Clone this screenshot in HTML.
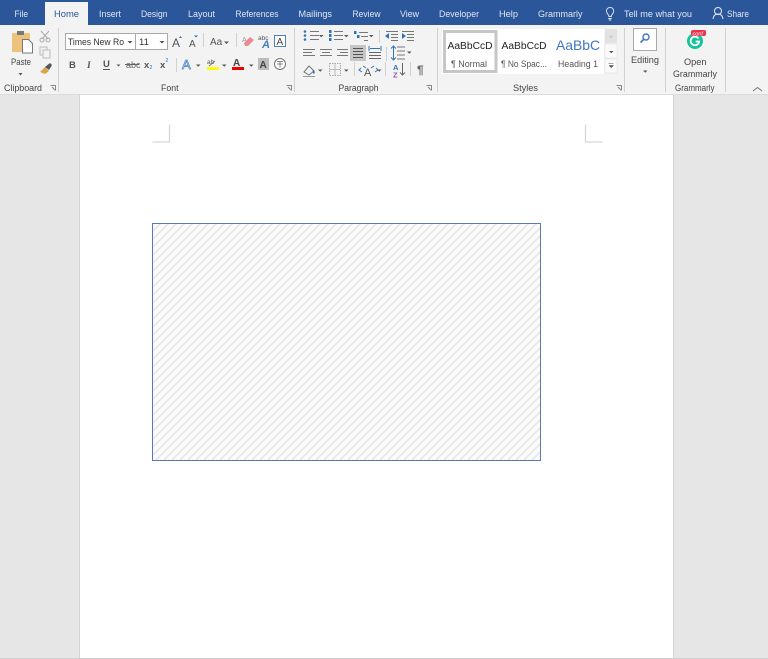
<!DOCTYPE html>
<html><head><meta charset="utf-8"><style>
html,body{margin:0;padding:0;background:#e6e6e6;width:768px;height:659px;overflow:hidden}
svg{display:block}
text{font-family:"Liberation Sans",sans-serif}
.t{font-size:9.5px;fill:#dfe7f3}
.r{font-size:9px;fill:#444}
.s{stroke:#d0d0d0;stroke-width:1}
.l{stroke:#888;stroke-width:1;fill:none}
.d{fill:#555}
</style></head><body>
<svg width="768" height="659" viewBox="0 0 768 659" xmlns="http://www.w3.org/2000/svg">
<defs>
<pattern id="h" width="8" height="8" patternUnits="userSpaceOnUse">
<rect width="8" height="8" fill="#fbfbfb"/>
<path d="M-2 2L2 -2M-2 10L10 -2M6 10L10 6" stroke="#e9e9e9" stroke-width="2"/>
</pattern>
</defs>
<rect width="768" height="659" fill="#e6e6e6"/>
<rect x="0" y="658" width="768" height="1" fill="#cfcfcf"/>
<rect x="80" y="95" width="593" height="563" fill="#fff"/>
<rect x="79" y="95" width="1" height="563" fill="#d4d4d4"/>
<rect x="673" y="95" width="1" height="563" fill="#d4d4d4"/>
<rect y="0" width="768" height="25" fill="#2b579a"/>
<rect y="25" width="768" height="69" fill="#f3f3f3"/>
<rect y="94" width="768" height="1" fill="#dcdcdc"/>
<rect x="45" y="2" width="43" height="23" fill="#f3f3f3"/>
<text class="t" x="14.500" y="17" textLength="13.500" lengthAdjust="spacingAndGlyphs">File</text>
<text class="t" x="54" y="17" style="fill:#2b579a" textLength="25" lengthAdjust="spacingAndGlyphs">Home</text>
<text class="t" x="99" y="17" textLength="22" lengthAdjust="spacingAndGlyphs">Insert</text>
<text class="t" x="141" y="17" textLength="26.500" lengthAdjust="spacingAndGlyphs">Design</text>
<text class="t" x="188" y="17" textLength="27" lengthAdjust="spacingAndGlyphs">Layout</text>
<text class="t" x="235.500" y="17" textLength="43" lengthAdjust="spacingAndGlyphs">References</text>
<text class="t" x="298.500" y="17" textLength="33.500" lengthAdjust="spacingAndGlyphs">Mailings</text>
<text class="t" x="352.500" y="17" textLength="28" lengthAdjust="spacingAndGlyphs">Review</text>
<text class="t" x="400" y="17" textLength="19" lengthAdjust="spacingAndGlyphs">View</text>
<text class="t" x="439" y="17" textLength="40" lengthAdjust="spacingAndGlyphs">Developer</text>
<text class="t" x="499" y="17" textLength="19" lengthAdjust="spacingAndGlyphs">Help</text>
<text class="t" x="538" y="17" textLength="44.500" lengthAdjust="spacingAndGlyphs">Grammarly</text>
<text class="t" x="624" y="17" textLength="68" lengthAdjust="spacingAndGlyphs">Tell me what you</text>
<text class="t" x="727" y="17" textLength="22" lengthAdjust="spacingAndGlyphs">Share</text>
<path d="M609 16.500c0-2-2.500-2.500-2.500-5.500a3.600 3.600 0 0 1 7.200 0c0 3-2.500 3.500-2.500 5.500zM608.300 18.500h3.400M608.800 20h2.400" fill="none" stroke="#e6ecf5" stroke-width=".9"/>
<circle cx="718" cy="11" r="3.500" fill="none" stroke="#e6ecf5" stroke-width="1"/>
<path d="M713 19c.5-3.500 2.500-5 5-5s4.500 1.500 5 5" fill="none" stroke="#e6ecf5" stroke-width="1"/>
<g class="s"><path d="M58.500 28v64M294.500 28v64M437.500 28v64M624.500 28v64M665.500 28v64M725.500 28v64"/></g>
<text class="r" x="4" y="91" textLength="38" lengthAdjust="spacingAndGlyphs">Clipboard</text>
<text class="r" x="161" y="91" textLength="17.500" lengthAdjust="spacingAndGlyphs">Font</text>
<text class="r" x="338.500" y="91" textLength="40" lengthAdjust="spacingAndGlyphs">Paragraph</text>
<text class="r" x="513" y="91" textLength="25" lengthAdjust="spacingAndGlyphs">Styles</text>
<text class="r" x="675" y="91" textLength="39.500" lengthAdjust="spacingAndGlyphs">Grammarly</text>
<g class="l"><path d="M50.500 85.500h5v5M52 87l3 3M286.500 85.500h5v5M288 87l3 3M426.500 85.500h5v5M428 87l3 3M616.500 85.500h5v5M618 87l3 3"/></g>
<path d="M753 91l4.500-3.500 4.500 3.500" fill="none" stroke="#777"/>
<!-- clipboard -->
<rect x="12" y="33" width="18" height="19" fill="#ecc27c"/>
<rect x="17" y="31" width="7" height="4" fill="#777"/>
<path d="M22.500 39.500h6l4 4v9.500h-10z" fill="#fff" stroke="#777"/>
<text class="r" x="11" y="65" style="font-size:9.500px" textLength="20" lengthAdjust="spacingAndGlyphs">Paste</text>
<path d="M18.500 73h4l-2 2.500z" class="d"/>
<path d="M41 31l7 8M49 31l-7 8" stroke="#aaa" fill="none"/><circle cx="42" cy="40" r="2" fill="none" stroke="#aaa"/><circle cx="48" cy="40" r="2" fill="none" stroke="#aaa"/>
<rect x="40" y="47" width="7" height="8" fill="#f3f3f3" stroke="#bbb"/><rect x="43" y="50" width="7" height="8" fill="#f3f3f3" stroke="#bbb"/>
<path d="M40 72l5-5 4 4-4 3z" fill="#d9a441"/><path d="M45 67l5-4 2 2-3 5z" fill="#555"/>
<!-- font -->
<rect x="65.500" y="33.500" width="70" height="16" fill="#fff" stroke="#a9a9a9"/>
<rect x="135.500" y="33.500" width="32" height="16" fill="#fff" stroke="#a9a9a9"/>
<text x="68" y="45" style="font-size:9.500px;fill:#333" textLength="56" lengthAdjust="spacingAndGlyphs">Times New Ro</text>
<text x="139" y="45" style="font-size:9.500px;fill:#333">11</text>
<path d="M127.500 41h5l-2.500 2.500zM159.500 41h5l-2.500 2.500z" class="d"/>
<text x="172" y="47" style="font-size:12px;fill:#555">A</text><path d="M179 38l1.500-2 1.500 2z" fill="#2b6cb0"/>
<text x="189" y="47" style="font-size:10px;fill:#555">A</text><path d="M194 35.500h4l-2 2z" fill="#2b6cb0"/>
<path d="M203.500 33v14" class="s"/>
<text x="210" y="45" style="font-size:10px;fill:#555">Aa</text><path d="M224 41.500h5l-2.500 2.500z" class="d"/>
<path d="M236.500 33v14" class="s"/>
<text x="242" y="42" style="font-size:7px;fill:#999">A</text><path d="M244 43l6-6 4 3-6 6h-3z" fill="#ea8a94"/>
<text x="258" y="40" style="font-size:6.500px;fill:#555">abc</text><text x="262" y="48" style="font-size:11px;font-weight:bold;font-style:italic;fill:#3f7fc0">A</text>
<rect x="274.500" y="35.500" width="11" height="11" fill="#fff" stroke="#4f7fb5"/><text x="276.500" y="45" style="font-size:10px;fill:#444">A</text>
<g style="font-size:9.500px;fill:#555"><text x="69" y="68" font-weight="bold">B</text><text x="87" y="68" font-style="italic" style="font-family:'Liberation Serif',serif;font-weight:bold">I</text><text x="103" y="67" font-weight="bold">U</text></g>
<path d="M103 69.500h7" stroke="#555"/><path d="M116.500 64.500h4l-2 2z" class="d"/>
<text x="126" y="68" style="font-size:9px;fill:#666">abc</text><path d="M125 64.500h14" stroke="#666"/>
<text x="144" y="68" style="font-size:9.500px;font-weight:bold;fill:#555">x</text><text x="149.500" y="69" style="font-size:5px;fill:#2b6cb0">2</text>
<text x="160" y="68" style="font-size:9.500px;font-weight:bold;fill:#555">x</text><text x="165.500" y="62" style="font-size:5px;fill:#2b6cb0">2</text>
<path d="M176.500 58v14" class="s"/>
<text x="182" y="69" style="font-size:13px;fill:#f3f3f3;stroke:#4f8ac9;stroke-width:.8">A</text><path d="M196 64.500h4.500l-2.250 2.200z" class="d"/>
<text x="207" y="64" style="font-size:6.500px;fill:#555">ab</text><path d="M209 66l6-5" stroke="#777"/><rect x="207" y="67" width="12" height="3" fill="#ffff00"/><path d="M222 64.500h4.500l-2.250 2.200z" class="d"/>
<text x="233" y="66" style="font-size:10px;font-weight:bold;fill:#444">A</text><rect x="232" y="67" width="12" height="3" fill="#ee0000"/><path d="M249 64.500h4.500l-2.250 2.200z" class="d"/>
<rect x="258" y="58" width="11" height="12" fill="#bcbcbc"/><text x="259.500" y="68" style="font-size:10px;font-weight:bold;fill:#444">A</text>
<circle cx="280" cy="64" r="5.500" fill="#fff" stroke="#777"/><path d="M277 61.500h6M277 64h6M280 61.500v6" stroke="#666" stroke-width=".8"/>
<!-- paragraph -->
<g stroke="#777" fill="none"><path d="M310 31.500h9M310 35.500h9M310 39.500h9M334 31.500h9M334 35.500h9M334 39.500h9M359 32.500h9M361 36.500h7M364 40.500h4"/></g>
<g fill="#2e75b6"><circle cx="305" cy="31.500" r="1.300"/><circle cx="305" cy="35.500" r="1.300"/><circle cx="305" cy="39.500" r="1.300"/><rect x="329" y="30" width="2.500" height="3"/><rect x="329" y="34" width="2.500" height="3"/><rect x="329" y="38" width="2.500" height="3"/><rect x="354" y="31" width="2.500" height="3"/><rect x="357" y="35" width="2.500" height="3"/></g>
<path d="M319 35h4.500l-2.250 2.200zM344 35h4.500l-2.250 2.200zM369 35h4.500l-2.250 2.200z" class="d"/>
<path d="M379.500 30v13" class="s"/>
<g stroke="#777" fill="none"><path d="M391 34.500h7M391 37.500h7M391 40.500h7M386 31.500h12M407 34.500h7M407 37.500h7M407 40.500h7M402 31.500h12"/></g>
<path d="M385 36l4-3v6zM406 36l-4-3v6z" fill="#2e75b6"/>
<g stroke="#777" fill="none"><path d="M303 49.500h12M303 52.500h9M303 55.500h12M320 49.500h12M322 52.500h8M320 55.500h12M337 49.500h11M340 52.500h8M337 55.500h11"/></g>
<rect x="350" y="45" width="16" height="16" fill="#c6c6c6"/>
<path d="M353 48.500h10M353 51.500h10M353 54.500h10M353 57.500h10" stroke="#555" fill="none"/>
<path d="M369 52.500h12M369 55.500h12M369 58.500h12" stroke="#666" fill="none"/><path d="M369 46v5M381 46v5M370 48.500h10" stroke="#2e75b6" fill="none"/>
<path d="M386.500 47v14" class="s"/>
<path d="M397 47h8M397 51h8M397 55h8M397 59h8" stroke="#777" fill="none"/><path d="M393.500 46v14M391 48.500l2.500-2.500 2.500 2.500M391 57.500l2.500 2.500 2.500-2.500" stroke="#2e75b6" fill="none"/><path d="M407 51.500h4.500l-2.250 2.200z" class="d"/>
<path d="M304 72l5-6 5 5-5 4z" fill="#f3f3f3" stroke="#777"/><path d="M313 70c2 1 2 3 1 4-1-1-2-2-1-4z" fill="#2e75b6"/><rect x="303" y="76" width="12" height="1" fill="#999"/><path d="M318 69.500h4.500l-2.250 2.200z" class="d"/>
<rect x="329.500" y="63.500" width="11" height="12" fill="none" stroke="#aaa" stroke-dasharray="1.500 1"/><path d="M335 64v11M330 69.500h10" stroke="#bbb"/><path d="M344 69.500h4.500l-2.250 2.200z" class="d"/>
<path d="M354.500 62v14" class="s"/>
<text x="364" y="76" style="font-size:11px;fill:#555">A</text><path d="M361 68l-2 2 3 2M376 68l2 2-3 2" stroke="#2e75b6" fill="none"/><path d="M363 66l3 2M374 66l-3 2" stroke="#2e75b6"/><path d="M377 69.500h4.500l-2.250 2.200z" class="d"/>
<path d="M385.500 62v14" class="s"/>
<text x="393" y="70" style="font-size:7.500px;font-weight:bold;fill:#2e75b6">A</text><text x="393" y="77.500" style="font-size:7.500px;font-weight:bold;fill:#8e5bb5">Z</text>
<path d="M402.500 63v12M400 72.500l2.500 2.500 2.500-2.500" stroke="#666" fill="none"/>
<path d="M410.500 62v14" class="s"/>
<text x="417" y="74" style="font-size:12px;fill:#666;font-weight:bold">¶</text>
<!-- styles -->
<rect x="442" y="29" width="162" height="45" fill="#fff"/>
<rect x="444.500" y="31.500" width="51.500" height="40" fill="#fff" stroke="#c6c6c6" stroke-width="3"/>
<text x="447.500" y="49" style="font-size:10px;fill:#222" textLength="45" lengthAdjust="spacingAndGlyphs">AaBbCcD</text>
<text x="451" y="67" style="font-size:9px;fill:#555" textLength="36" lengthAdjust="spacingAndGlyphs">¶ Normal</text>
<text x="501.500" y="49" style="font-size:10px;fill:#222" textLength="45" lengthAdjust="spacingAndGlyphs">AaBbCcD</text>
<text x="501" y="67" style="font-size:9px;fill:#555" textLength="46" lengthAdjust="spacingAndGlyphs">¶ No Spac...</text>
<text x="556" y="50" style="font-size:14px;fill:#3f78bf;font-weight:normal" textLength="44" lengthAdjust="spacingAndGlyphs">AaBbC</text>
<text x="558" y="67" style="font-size:9px;fill:#555" textLength="40" lengthAdjust="spacingAndGlyphs">Heading 1</text>
<rect x="605" y="29" width="12" height="14" fill="#e2e2e2"/><rect x="605" y="44" width="12" height="14" fill="#fafafa" stroke="#dcdcdc" stroke-width=".5"/><rect x="605" y="59" width="12" height="14" fill="#fafafa" stroke="#dcdcdc" stroke-width=".5"/>
<path d="M609 37.500l2-2.500 2 2.500z" fill="#c4c4c4"/><path d="M609 51h4.500l-2.250 2.300z" class="d"/><path d="M608.500 63.500h5M609 65.500h4.500l-2.250 2.300z" class="d" stroke="#555" stroke-width=".5"/>
<!-- editing -->
<rect x="633.500" y="28.500" width="23" height="22" fill="#fff" stroke="#a9a9a9"/>
<circle cx="646" cy="37" r="3" fill="none" stroke="#3f78bf" stroke-width="1.400"/><path d="M644 39l-3.500 3.500" stroke="#3f78bf" stroke-width="1.600"/>
<text class="r" x="631" y="63" style="font-size:9.500px" textLength="28" lengthAdjust="spacingAndGlyphs">Editing</text>
<path d="M643 70.500h4.500l-2.250 2.300z" class="d"/>
<!-- grammarly -->
<circle cx="695" cy="41" r="8" fill="#15c39a"/>
<path d="M698.500 38.500a4.300 4.300 0 1 0 .7 3h-3.500" fill="none" stroke="#fff" stroke-width="1.800"/>
<rect x="691" y="30" width="15" height="6" rx="2" fill="#f0304f"/>
<text x="692.500" y="35.300" style="font-size:5.500px;font-style:italic;fill:#fff">conf</text>
<text class="r" x="684" y="65" style="font-size:9.500px" textLength="22.500" lengthAdjust="spacingAndGlyphs">Open</text>
<text class="r" x="673" y="77" style="font-size:9.500px" textLength="44" lengthAdjust="spacingAndGlyphs">Grammarly</text>
<!-- page -->
<path d="M169.500 125v17h-17" fill="none" stroke="#d6d6d6" stroke-width="1.300"/>
<path d="M585.500 125v17h17" fill="none" stroke="#d6d6d6" stroke-width="1.300"/>
<rect x="152.500" y="223.500" width="388" height="237" fill="url(#h)" stroke="#5a78b8" stroke-width="1"/>
</svg>
</body></html>
